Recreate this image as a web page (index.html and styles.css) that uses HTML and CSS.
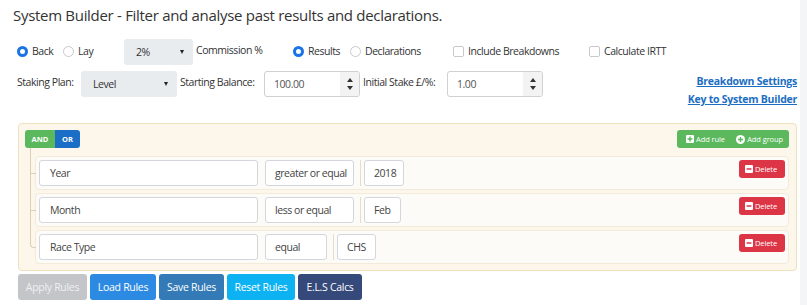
FILE: index.html
```html
<!DOCTYPE html>
<html lang="en">
<head>
    <meta charset="UTF-8">
    <meta name="viewport" content="width=device-width, initial-scale=1.0">
    <title>System Builder</title>
    <link rel="stylesheet" href="styles.css">
</head>
<body>
    <div class="page">
        <h1 class="title">System Builder - Filter and analyse past results and declarations.</h1>

        <div class="row row-one">
            <label class="opt opt-back"><input type="radio" name="side" checked> Back</label>
            <label class="opt opt-lay"><input type="radio" name="side"> Lay</label>
            <div class="select select-comm">2%<span class="caret"></span></div>
            <span class="opt opt-comm">Commission %</span>
            <label class="opt opt-results"><input type="radio" name="mode" checked> Results</label>
            <label class="opt opt-decl"><input type="radio" name="mode"> Declarations</label>
            <label class="opt opt-breakdowns"><input type="checkbox"> Include Breakdowns</label>
            <label class="opt"><input type="checkbox"> Calculate IRTT</label>
        </div>

        <div class="row row-two">
            <span class="field-label label-plan">Staking Plan:</span>
            <div class="select select-plan">Level<span class="caret"></span></div>
            <span class="field-label label-balance">Starting Balance:</span>
            <div class="number">
                <span class="number-value">100.00</span>
                <span class="spinner"><i class="up"></i><i class="down"></i></span>
            </div>
            <span class="field-label label-stake">Initial Stake £/%:</span>
            <div class="number">
                <span class="number-value">1.00</span>
                <span class="spinner"><i class="up"></i><i class="down"></i></span>
            </div>
            <div class="links">
                <a href="#">Breakdown Settings</a>
                <a href="#">Key to System Builder</a>
            </div>
        </div>

        <div class="builder">
            <div class="group-header">
                <div class="conditions">
                    <span class="cond cond-and">AND</span>
                    <span class="cond cond-or">OR</span>
                </div>
                <div class="group-actions">
                    <span class="small-btn">
                        <svg width="8" height="8" viewBox="0 0 8 8"><rect width="8" height="8" rx="1" fill="#fff"/><path d="M4 1.6v4.8M1.6 4h4.8" stroke="#5cb85c" stroke-width="1.4"/></svg>
                        Add rule
                    </span>
                    <span class="small-btn">
                        <svg width="9" height="9" viewBox="0 0 9 9"><circle cx="4.5" cy="4.5" r="4.5" fill="#fff"/><path d="M4.5 2v5M2 4.5h5" stroke="#5cb85c" stroke-width="1.4"/></svg>
                        Add group
                    </span>
                </div>
            </div>

            <div class="rules">
                <div class="rule">
                    <div class="input field">Year</div>
                    <div class="input operator">greater or equal</div>
                    <span class="sep"></span>
                    <div class="input value value-year">2018</div>
                    <span class="delete-btn">
                        <svg width="8" height="8" viewBox="0 0 8 8"><rect width="8" height="8" rx="1" fill="#fff"/><path d="M1.6 4h4.8" stroke="#dc3545" stroke-width="1.5"/></svg>
                        Delete
                    </span>
                </div>
                <div class="rule">
                    <div class="input field">Month</div>
                    <div class="input operator">less or equal</div>
                    <span class="sep"></span>
                    <div class="input value value-month">Feb</div>
                    <span class="delete-btn">
                        <svg width="8" height="8" viewBox="0 0 8 8"><rect width="8" height="8" rx="1" fill="#fff"/><path d="M1.6 4h4.8" stroke="#dc3545" stroke-width="1.5"/></svg>
                        Delete
                    </span>
                </div>
                <div class="rule">
                    <div class="input field">Race Type</div>
                    <div class="input operator operator-short">equal</div>
                    <span class="sep"></span>
                    <div class="input value value-type">CHS</div>
                    <span class="delete-btn">
                        <svg width="8" height="8" viewBox="0 0 8 8"><rect width="8" height="8" rx="1" fill="#fff"/><path d="M1.6 4h4.8" stroke="#dc3545" stroke-width="1.5"/></svg>
                        Delete
                    </span>
                </div>
            </div>
        </div>

        <div class="actions">
            <button class="btn btn-apply">Apply Rules</button>
            <button class="btn btn-load">Load Rules</button>
            <button class="btn btn-save">Save Rules</button>
            <button class="btn btn-reset">Reset Rules</button>
            <button class="btn btn-els">E.L.S Calcs</button>
        </div>
    </div>
    <div class="scroll-track"></div>
</body>
</html>
```

FILE: styles.css
```css
body {
    margin: 0;
    display: flex;
    height: 305px;
    overflow: hidden;
    font-family: "Open Sans", Arial, sans-serif;
    font-size: 10.5px;
    letter-spacing: -0.45px;
    color: #333;
    background-color: white;
}
.page {
    flex: 1;
    padding: 0 3px 0 17px;
}
.scroll-track {
    width: 7px;
    background-color: #f4f5f7;
}
.title {
    margin: 0 0 0 -4px;
    padding-top: 4px;
    font-size: 15px;
    line-height: 22px;
    font-weight: normal;
    letter-spacing: -0.3px;
    color: #333;
}

/* option rows */
.row {
    display: flex;
}
.row-one {
    margin-top: 13px;
    height: 26px;
    align-items: center;
}
.row-two {
    margin-top: 6px;
    align-items: flex-start;
}
.opt {
    display: flex;
    align-items: center;
    margin-top: -2px;
    white-space: nowrap;
}
.opt input {
    appearance: none;
    margin: 0 4px 0 0;
    width: 11px;
    height: 11px;
    border: 1px solid #c9c9c9;
    background-color: white;
}
.opt input[type="radio"] {
    border-radius: 50%;
}
.opt input[type="radio"]:checked {
    border: 3px solid #1a73e8;
}
.opt input[type="checkbox"] {
    border-radius: 2px;
}
.opt-back { width: 46px; }
.opt-lay { width: 61px; }
.opt-comm { width: 97px; margin-top: -4px; }
.opt-results { width: 57px; }
.opt-decl { width: 103px; }
.opt-breakdowns { width: 136px; }

.select {
    position: relative;
    box-sizing: border-box;
    height: 26px;
    line-height: 26px;
    padding-left: 12px;
    background-color: #e9ecef;
    border-radius: 3px;
    color: #333;
}
.caret {
    position: absolute;
    right: 9px;
    top: 11px;
    border-left: 2.5px solid transparent;
    border-right: 2.5px solid transparent;
    border-top: 4px solid #222;
}
.select-comm {
    width: 69px;
    margin-right: 3px;
}
.select-plan {
    width: 96px;
    margin-right: 3px;
}
.field-label {
    line-height: 22px;
    white-space: nowrap;
}
.label-plan { width: 64px; }
.label-balance { width: 84px; }
.label-stake { width: 84px; }

.number {
    box-sizing: border-box;
    display: flex;
    width: 96px;
    height: 26px;
    margin-right: 3px;
    border: 1px solid #d0d0d0;
    border-radius: 3px;
    background-color: white;
}
.number-value {
    flex: 1;
    padding-left: 9px;
    line-height: 24px;
    color: #555;
}
.spinner {
    width: 19px;
    display: flex;
    flex-direction: column;
    align-items: center;
    justify-content: center;
    gap: 4px;
    background-color: #f3f3f3;
    border-radius: 0 3px 3px 0;
}
.spinner .up {
    border-left: 3px solid transparent;
    border-right: 3px solid transparent;
    border-bottom: 4px solid #333;
}
.spinner .down {
    border-left: 3px solid transparent;
    border-right: 3px solid transparent;
    border-top: 4px solid #333;
}
.links {
    margin-left: auto;
    display: flex;
    flex-direction: column;
    align-items: flex-end;
    padding-top: 1px;
}
.links a {
    font-weight: bold;
    font-size: 10.5px;
    line-height: 18px;
    letter-spacing: -0.25px;
    color: #1b6ec2;
}

/* query builder */
.builder {
    margin: 15px 0 0 1px;
    padding: 6px 7px 6px 6px;
    background-color: #fcf7ea;
    border: 1px solid #ece0bd;
    border-radius: 4px;
}
.group-header {
    display: flex;
    justify-content: space-between;
    height: 18px;
}
.conditions {
    display: flex;
}
.cond {
    height: 18px;
    line-height: 18px;
    font-size: 7.5px;
    font-weight: bold;
    letter-spacing: 0;
    color: white;
    text-align: center;
}
.cond-and {
    width: 30px;
    background-color: #5cb85c;
    border-radius: 3px 0 0 3px;
}
.cond-or {
    width: 25px;
    background-color: #1a6ec6;
    border-radius: 0 3px 3px 0;
}
.group-actions {
    display: flex;
    align-items: center;
    justify-content: space-between;
    box-sizing: border-box;
    width: 112px;
    padding: 0 6px 0 9px;
    background-color: #5cb85c;
    border-radius: 3px;
}
.small-btn, .delete-btn {
    display: flex;
    align-items: center;
    gap: 2px;
    font-size: 7.5px;
    letter-spacing: -0.1px;
    color: white;
}
.rules {
    margin-top: 8px;
    padding-left: 10px;
}
.rule {
    position: relative;
    display: flex;
    align-items: center;
    height: 34px;
    box-sizing: border-box;
    padding: 3px;
    margin-bottom: 3px;
    background-color: #fdfbf7;
    border: 1px solid #f2ebd9;
    border-radius: 4px;
}
.rule:last-child {
    margin-bottom: 0;
}
.rule::before {
    content: '';
    position: absolute;
    left: -6px;
    top: -9px;
    width: 5px;
    height: calc(50% + 9px);
    border-left: 1px solid #d9d0b6;
    border-bottom: 1px solid #d9d0b6;
}
.rule::after {
    content: '';
    position: absolute;
    left: -6px;
    top: 50%;
    height: calc(50% + 4px);
    border-left: 1px solid #d9d0b6;
}
.rule:last-child::after {
    display: none;
}
.rule:last-child::before {
    border-bottom-left-radius: 4px;
}
.input {
    box-sizing: border-box;
    height: 26px;
    line-height: 24px;
    padding-left: 9px;
    background-color: white;
    border: 1px solid #d3d6dc;
    border-radius: 3px;
    color: #444;
    white-space: nowrap;
}
.field {
    width: 219px;
    padding-left: 10px;
    margin-right: 7px;
}
.operator {
    width: 89px;
}
.operator-short {
    width: 62px;
}
.sep {
    width: 1px;
    height: 26px;
    margin: 0 3px 0 6px;
    background-color: #e3ddcd;
}
.value-year { width: 40px; }
.value-month { width: 37px; }
.value-type { width: 39px; }
.delete-btn {
    align-self: flex-start;
    margin-left: auto;
    box-sizing: border-box;
    width: 46px;
    height: 18px;
    padding-left: 6px;
    background-color: #dc3545;
    border-radius: 3px;
}

/* bottom buttons */
.actions {
    display: flex;
    gap: 3px;
    margin: 3px 0 0 1px;
}
.btn {
    height: 26px;
    padding: 0;
    border: none;
    border-radius: 3px;
    font-family: "Open Sans", Arial, sans-serif;
    font-size: 10.5px;
    letter-spacing: -0.3px;
    color: white;
    cursor: pointer;
}
.btn-apply { width: 69px; background-color: #c3c5c9; color: #eef0f3; }
.btn-load { width: 66px; background-color: #2d8ae2; }
.btn-save { width: 65px; background-color: #337ab7; }
.btn-reset { width: 68px; background-color: #0cb2f2; }
.btn-els { width: 64px; background-color: #35497a; }
```
